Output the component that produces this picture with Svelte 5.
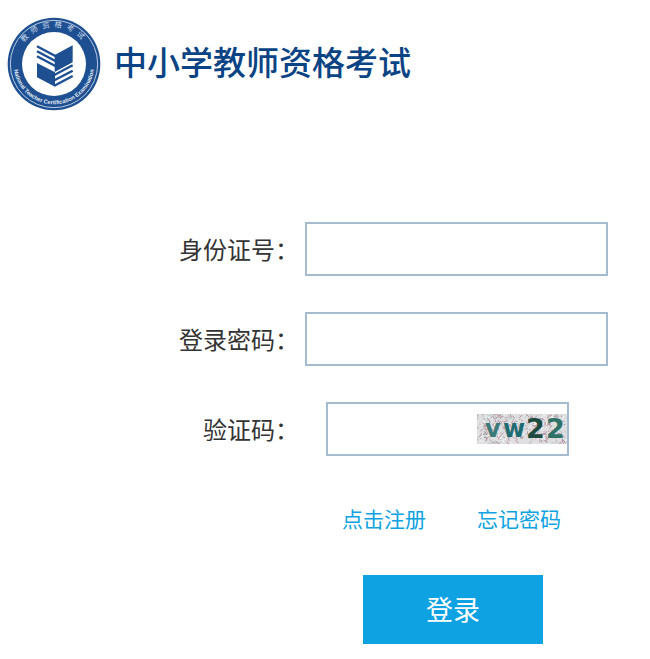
<script>
  let idNumber = '';
  let password = '';
  let code = '';

  // speckle lines behind the verification code
  const colors = ['#a08f9a', '#b58f9d', '#c9a3b0', '#f4f8f7', '#b5cbc6', '#bda7b3', '#d6eae6'];
  let seed = 22;
  function random() {
    seed = (seed * 16807) % 2147483647;
    return seed / 2147483647;
  }
  const noise = Array.from({ length: 420 }, () => {
    const x = random() * 90;
    const y = random() * 30;
    return {
      x1: x,
      y1: y,
      x2: x + random() * 8 - 4,
      y2: y + random() * 8 - 4,
      color: colors[Math.floor(random() * colors.length)]
    };
  });
</script>

<header class="header" lang="zh-CN">
  <svg class="logo" viewBox="21 22 282 282" aria-hidden="true">
    <defs>
      <path id="arc-top" d="M52 163 A110 110 0 0 1 272 163" />
      <path id="arc-bottom" d="M41 163 A121 121 0 0 0 283 163" />
    </defs>
    <circle cx="162" cy="163" r="139" fill="#1d4f91" />
    <circle cx="162" cy="163" r="131" fill="none" stroke="#b9cce3" stroke-width="3" />
    <circle cx="162" cy="163" r="96" fill="#fff" />
    <text class="ring-cn"><textPath href="#arc-top" startOffset="50%" text-anchor="middle">教师资格考试</textPath></text>
    <text class="ring-en"><textPath href="#arc-bottom" startOffset="50%" text-anchor="middle">National Teacher Certification Examination</textPath></text>
    <g fill="#1d4f91">
      <path d="M164 136 L218 107 V158 L164 187 Z" />
      <path d="M111 160 L165 188 V231 L111 203 Z" />
    </g>
    <g fill="none" stroke="#1d4f91" stroke-width="7">
      <path d="M111 110 L166 139" />
      <path d="M111 125 L166 154" />
      <path d="M111 140 L166 169" />
      <path d="M163 196 L218 167" />
      <path d="M163 212 L218 183" />
      <path d="M163 228 L218 199" />
    </g>
  </svg>
  <h1 class="title">中小学教师资格考试</h1>
</header>

<form class="login" lang="zh-CN" on:submit|preventDefault>
  <div class="row">
    <label for="id-number">身份证号：</label>
    <input id="id-number" type="text" bind:value={idNumber} />
  </div>
  <div class="row">
    <label for="password">登录密码：</label>
    <input id="password" type="password" bind:value={password} />
  </div>
  <div class="row">
    <label for="code">验证码：</label>
    <div class="code-box">
      <input id="code" type="text" bind:value={code} />
      <svg class="captcha" viewBox="0 0 90 30" role="img" aria-label="验证码">
        <rect width="90" height="30" fill="#dfdfe1" />
        {#each noise as n}
          <line x1={n.x1} y1={n.y1} x2={n.x2} y2={n.y2} stroke={n.color} />
        {/each}
        <text x="8" y="23" fill="#3b7a78">v</text>
        <text x="26" y="23" fill="#1f6d72">w</text>
        <text class="digit" x="49" y="24" fill="#1d4b3f">2</text>
        <text class="digit" x="69" y="24" fill="#2f7166">2</text>
      </svg>
    </div>
  </div>

  <div class="links">
    <a href="#register">点击注册</a>
    <a href="#forgot">忘记密码</a>
  </div>

  <button class="submit" type="submit">登录</button>
</form>

<style>
  :global(body) {
    margin: 0;
    background: #fff;
    color: #333;
    font-family: "Noto Sans CJK SC", sans-serif;
  }
  .header {
    display: flex;
    align-items: center;
    gap: 13px;
    padding: 17px 7px 0;
  }
  .logo {
    width: 94px;
    height: 94px;
    flex: none;
  }
  .ring-cn {
    fill: #c9d8ea;
    font-size: 23px;
    letter-spacing: 12px;
  }
  .ring-en {
    fill: #e3ebf5;
    font-family: "Liberation Sans", sans-serif;
    font-size: 17px;
    font-weight: bold;
  }
  .title {
    margin: 0;
    padding-bottom: 6px;
    color: #0b4484;
    font-size: 33px;
    font-weight: 500;
    line-height: 48px;
  }
  .login {
    display: flex;
    flex-direction: column;
    gap: 36px;
    max-width: 429px;
    margin: 111px auto 0;
    padding-left: 179px;
    padding-right: 42px;
  }
  .row {
    display: flex;
    align-items: center;
    gap: 6px;
  }
  label {
    width: 120px;
    flex: none;
    font-size: 24px;
    line-height: 36px;
    text-align: right;
  }
  input {
    box-sizing: border-box;
    flex: 1;
    min-width: 0;
    height: 54px;
    padding: 0 12px;
    border: 2px solid #a5bbcf;
    background: #fff;
    font-family: inherit;
    font-size: 24px;
  }
  .code-box {
    box-sizing: border-box;
    display: flex;
    align-items: center;
    flex: 1;
    min-width: 0;
    height: 54px;
    margin: 0 39px 0 21px;
    border: 2px solid #a5bbcf;
  }
  .code-box input {
    height: 50px;
    border: 0;
  }
  .captcha {
    width: 90px;
    height: 30px;
    flex: none;
  }
  .captcha text {
    font-family: "DejaVu Sans", sans-serif;
    font-size: 24px;
    font-weight: bold;
  }
  .captcha .digit {
    font-size: 27px;
  }
  .links {
    display: flex;
    justify-content: center;
    gap: 51px;
    margin: 11px 0 6px 116px;
  }
  a {
    color: #0ea2e2;
    font-size: 21px;
    line-height: 30px;
    text-decoration: none;
  }
  .submit {
    align-self: center;
    width: 180px;
    height: 69px;
    margin-left: 119px;
    padding: 0 0 2px;
    border: 0;
    background: #0ea2e2;
    color: #fff;
    font-family: inherit;
    font-size: 27px;
    cursor: pointer;
  }
</style>
